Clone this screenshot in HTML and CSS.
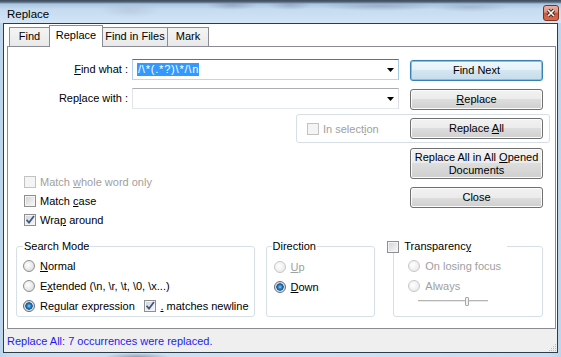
FILE: index.html
```html
<!DOCTYPE html>
<html>
<head>
<meta charset="utf-8">
<title>Replace</title>
<link rel="stylesheet" href="styles.css">
</head>
<body>
<div class="window">
  <div class="titlebar">
    <span class="title">Replace</span>
    <svg class="close" viewBox="0 0 16 16" width="16" height="16">
      <defs>
        <linearGradient id="cr" x1="0" y1="0" x2="0" y2="1">
          <stop offset="0" stop-color="#ebb5a8"/>
          <stop offset="0.45" stop-color="#d98e7c"/>
          <stop offset="0.5" stop-color="#c8553c"/>
          <stop offset="1" stop-color="#db6c4c"/>
        </linearGradient>
      </defs>
      <rect x="0.5" y="0.5" width="15" height="15" rx="2.5" fill="url(#cr)" stroke="#7a3225"/>
      <path d="M5 5l6 6M11 5l-6 6" stroke="#4a2119" stroke-width="3.4"/>
      <path d="M5 5l6 6M11 5l-6 6" stroke="#ffffff" stroke-width="1.6"/>
    </svg>
  </div>
  <div class="client">
    <div class="tabs">
      <div class="tab t-find">Find</div>
      <div class="tab t-replace active">Replace</div>
      <div class="tab t-files">Find in Files</div>
      <div class="tab t-mark">Mark</div>
    </div>
    <div class="panel">
      <div class="topgrid">
        <div class="lbl"><u>F</u>ind what :</div>
        <div class="combo focus"><span class="sel">/\*(.*?)\*/\n</span><svg class="arrow" width="7" height="4" viewBox="0 0 7 4"><polygon points="0,0 7,0 3.5,4" fill="#000"/></svg></div>
        <div class="btn default"><span>Find Next</span></div>
        <div class="lbl">Rep<u>l</u>ace with :</div>
        <div class="combo"><svg class="arrow" width="7" height="4" viewBox="0 0 7 4"><polygon points="0,0 7,0 3.5,4" fill="#000"/></svg></div>
        <div class="btn"><span><u>R</u>eplace</span></div>
        <div class="selgroup">
          <div class="ck disabled"><span class="cb"></span><span>In select<u>i</u>on</span></div>
          <div class="btn"><span>Replace <u>A</u>ll</span></div>
        </div>
      </div>
      <div class="middle">
        <div class="options">
          <div class="ck disabled"><span class="cb"></span><span>Match <u>w</u>hole word only</span></div>
          <div class="ck"><span class="cb"></span><span>Match <u>c</u>ase</span></div>
          <div class="ck"><span class="cb checked"><svg width="12" height="12" viewBox="0 0 12 12"><polyline points="2.5,5.8 5,8.6 10,2" fill="none" stroke="#3e5487" stroke-width="1.7"/></svg></span><span>Wra<u>p</u> around</span></div>
        </div>
        <div class="btncol">
          <div class="btn tall"><span>Replace All in All <u>O</u>pened<br>Documents</span></div>
          <div class="btn"><span>Close</span></div>
        </div>
      </div>
      <div class="groups">
        <fieldset class="grp g-search">
          <legend>Search Mode</legend>
          <div class="gbody">
            <div class="rb-row"><span class="rd"></span><span><u>N</u>ormal</span></div>
            <div class="rb-row"><span class="rd"></span><span>E<u>x</u>tended (\n, \r, \t, \0, \x...)</span></div>
            <div class="rb-row"><span class="rd on"></span><span>Re<u>g</u>ular expression</span>
              <span class="ck inline"><span class="cb checked"><svg width="12" height="12" viewBox="0 0 12 12"><polyline points="2.5,5.8 5,8.6 10,2" fill="none" stroke="#3e5487" stroke-width="1.7"/></svg></span><span><u>.</u> matches newline</span></span>
            </div>
          </div>
        </fieldset>
        <fieldset class="grp g-dir">
          <legend>Direction</legend>
          <div class="gbody">
            <div class="rb-row disabled"><span class="rd"></span><span><u>U</u>p</span></div>
            <div class="rb-row"><span class="rd on"></span><span><u>D</u>own</span></div>
          </div>
        </fieldset>
        <fieldset class="grp g-trans">
          <legend><span class="cb"></span><span>Transparenc<u>y</u></span></legend>
          <div class="gbody">
            <div class="rb-row disabled"><span class="rd"></span><span>On losing focus</span></div>
            <div class="rb-row disabled"><span class="rd"></span><span>Always</span></div>
            <div class="slider"><span class="thumb"></span></div>
          </div>
        </fieldset>
      </div>
    </div>
    <div class="status">
      <span>Replace All: 7 occurrences were replaced.</span>
      <svg class="grip" width="10" height="10" viewBox="0 0 10 10">
        <g fill="#b9b9b9">
          <rect x="8" y="2" width="1" height="1"/>
          <rect x="6" y="4" width="1" height="1"/><rect x="8" y="4" width="1" height="1"/>
          <rect x="4" y="6" width="1" height="1"/><rect x="6" y="6" width="1" height="1"/><rect x="8" y="6" width="1" height="1"/>
          <rect x="2" y="8" width="1" height="1"/><rect x="4" y="8" width="1" height="1"/><rect x="6" y="8" width="1" height="1"/><rect x="8" y="8" width="1" height="1"/>
        </g>
      </svg>
    </div>
  </div>
</div>
</body>
</html>
```

FILE: styles.css
```css
* { box-sizing: border-box; }
html, body { margin: 0; padding: 0; }
body {
  width: 561px;
  height: 357px;
  overflow: hidden;
  font-family: "Liberation Sans", Arial, sans-serif;
  font-size: 11px;
  color: #000;
  background: #c6dcf0;
}
u { text-decoration: underline; text-underline-offset: 1px; }

.window {
  width: 561px;
  height: 357px;
  display: flex;
  flex-direction: column;
  background:
    radial-gradient(ellipse 34px 4px at 137px 357px, rgba(70,80,100,.45), rgba(70,80,100,0)),
    linear-gradient(90deg, #bcd5ec, #c9def2 2%, #cfe2f4 50%, #c9def2 98%, #bcd5ec);
}

.titlebar {
  height: 23px;
  display: flex;
  align-items: flex-start;
  padding: 0 2px 0 7px;
  background:
    radial-gradient(ellipse 26px 5px at 232px 5px, rgba(90,105,130,.35), rgba(90,105,130,0)),
    radial-gradient(ellipse 22px 5px at 290px 5px, rgba(90,105,130,.3), rgba(90,105,130,0)),
    radial-gradient(ellipse 60px 5px at 380px 6px, rgba(90,105,130,.3), rgba(90,105,130,0)),
    radial-gradient(ellipse 40px 5px at 470px 7px, rgba(90,105,130,.25), rgba(90,105,130,0)),
    radial-gradient(ellipse 30px 8px at 130px 10px, rgba(160,175,195,.35), rgba(160,175,195,0)),
    linear-gradient(#3d4c5b 0, #52647a 2px, #aac6e2 4px, #c5dbf0 40%, #d3e5f6 100%);
}
.title {
  margin-top: 7px;
  font-size: 11.5px;
  line-height: 14px;
}
.close {
  display: block;
  margin-left: auto;
  margin-top: 5px;
}

.client {
  flex: 1;
  margin: 0 3px 4px 3px;
  border: 1px solid #2e3b48;
  background: #fff;
  display: flex;
  flex-direction: column;
}

.tabs {
  height: 22px;
  display: flex;
  align-items: flex-end;
  padding-left: 5px;
  position: relative;
  z-index: 1;
}
.tab {
  height: 19px;
  border: 1px solid #898c95;
  border-bottom: none;
  margin-left: -1px;
  text-align: center;
  line-height: 17px;
  white-space: nowrap;
  background: linear-gradient(#f4f4f4, #e9e9e9);
}
.t-find { width: 41px; margin-left: 0; }
.t-replace { width: 54px; }
.t-files { width: 66px; }
.t-mark { width: 42px; }
.tab.active {
  height: 22px;
  margin-bottom: -1px;
  background: #fff;
  line-height: 19px;
  position: relative;
  z-index: 2;
}

.panel {
  flex: 1;
  margin: 0 1px 0 3px;
  border: 1px solid #898c95;
  padding: 12px 12px 0 0;
  display: flex;
  flex-direction: column;
}

.topgrid {
  display: grid;
  grid-template-columns: 124px 278px 133px;
  grid-template-rows: 21px 21px auto;
  row-gap: 8px;
}
.lbl {
  padding-right: 4px;
  text-align: right;
  line-height: 21px;
  white-space: nowrap;
}
.combo {
  width: 267px;
  height: 21px;
  border: 1px solid;
  border-color: #abadb3 #dbdfe6 #e3e9ef #e2e3ea;
  display: flex;
  align-items: center;
  padding: 0 4px 0 4px;
  background: #fff;
}
.combo.focus { border-color: #3d7bad #a4c9e3 #b7d9ed #b5cfe7; }
.sel {
  background: #3399ff;
  color: #fff;
  line-height: 13px;
  letter-spacing: 0.8px;
  padding: 0 0 0 1px;
  white-space: nowrap;
}
.arrow { display: block; margin-left: auto; }

.btn {
  width: 133px;
  height: 21px;
  border: 1px solid #707070;
  border-radius: 3px;
  background: linear-gradient(#f2f2f2 0%, #ebebeb 50%, #dddddd 50%, #cfcfcf 100%);
  box-shadow: inset 0 0 0 1px #fbfbfb;
  display: flex;
  align-items: center;
  justify-content: center;
  line-height: 13px;
}
.btn > span {
  display: block;
  text-align: center;
  white-space: nowrap;
}
.topgrid > .btn { margin-top: 1px; }
.btn.default {
  border-color: #3c7fb1;
  background: linear-gradient(#eef7fc 0%, #e4f1f9 50%, #d3e6f2 50%, #c6dcea 100%);
  box-shadow: inset 0 0 0 1px #5fd3f3, 0 0 1px #7fc8ee;
}
.btn.tall { height: 31px; }

.selgroup {
  grid-column: 2 / 4;
  justify-self: end;
  width: 254px;
  height: 29px;
  margin-right: -7px;
  margin-top: -3px;
  border: 1px solid #d5dfe5;
  border-radius: 3px;
  display: flex;
  align-items: center;
  justify-content: space-between;
  padding: 0 6px 0 10px;
}

.ck {
  display: flex;
  align-items: center;
  height: 19px;
  white-space: nowrap;
}
.ck.inline { display: inline-flex; margin-left: auto; height: 13px; }
.cb {
  width: 12px;
  height: 12px;
  flex: none;
  border: 1px solid #8e8f8f;
  background: linear-gradient(135deg, #cdd1d7 0%, #eeeeee 70%, #f9f9f9 100%);
  box-shadow: inset 0 0 0 1px #f4f4f4;
  margin-right: 4px;
}
.cb svg { display: block; margin: -1px; }
.disabled, .disabled u { color: #a0a0a0; }
.disabled .cb {
  border-color: #c2c2c2;
  background: #f4f4f4;
  box-shadow: none;
}

.middle {
  display: flex;
  justify-content: space-between;
}
.options { padding: 29px 0 0 16px; }
.btncol {
  padding-top: 5px;
  display: flex;
  flex-direction: column;
  gap: 8px;
}

.groups {
  display: flex;
  margin-top: 11px;
  padding-left: 8px;
}
.grp {
  margin: 0;
  padding: 0;
  min-width: 0;
  height: 77px;
  border: 1px solid #d5dfe5;
  border-radius: 3px;
}
.grp legend {
  padding: 0 1px;
  line-height: 13px;
  white-space: nowrap;
}
.g-search { width: 239px; }
.g-search legend { margin-left: 6px; }
.g-dir { width: 110px; margin-left: 11px; }
.g-dir legend { margin-left: 5px; }
.g-trans { width: 150px; margin-left: 18px; }
.g-trans legend {
  margin-left: -7px;
  width: 120px;
  padding: 0;
  display: flex;
  align-items: center;
  height: 13px;
}
.g-trans legend .cb { margin-right: 5px; }

.gbody { padding: 3px 5px 0 6px; }
.g-dir .gbody { padding: 4px 0 0 7px; }
.g-trans .gbody { padding: 3px 0 0 14px; }

.rb-row {
  display: flex;
  align-items: center;
  height: 20px;
  white-space: nowrap;
}
.rd {
  width: 12px;
  height: 12px;
  flex: none;
  border-radius: 50%;
  border: 1px solid #8e8f8f;
  background: radial-gradient(circle at 40% 40%, #ffffff 0, #ececec 45%, #cfcfcf 100%);
  margin-right: 5px;
}
.rd.on {
  border-color: #5a6f86;
  background: radial-gradient(circle at 50% 50%, #8fd8ff 0, #2f8fd6 1.6px, #184c7e 3.4px, #e3e3e3 4px, #d0d0d0 100%);
}
.rb-row.disabled .rd {
  border-color: #c6c6c6;
  background: radial-gradient(circle at 40% 40%, #ffffff 0, #f2f2f2 50%, #e4e4e4 100%);
}

.slider {
  margin: 0 0 0 10px;
  width: 70px;
  height: 10px;
  display: flex;
  align-items: center;
  background: linear-gradient(transparent 4px, #b5b5b5 4px, #b5b5b5 5px, #e9e9e9 5px, #e9e9e9 6px, transparent 6px);
}
.thumb {
  width: 4px;
  height: 9px;
  margin-left: 47px;
  border: 1px solid #a8a8a8;
  background: #f2f2f2;
  border-radius: 1px;
}

.status {
  height: 23px;
  background: #f0efef;
  display: flex;
  align-items: center;
  padding-left: 3px;
  color: #1c1cf0;
  white-space: nowrap;
}
.grip {
  display: block;
  margin-left: auto;
  align-self: flex-end;
  margin-bottom: 0;
}
```
